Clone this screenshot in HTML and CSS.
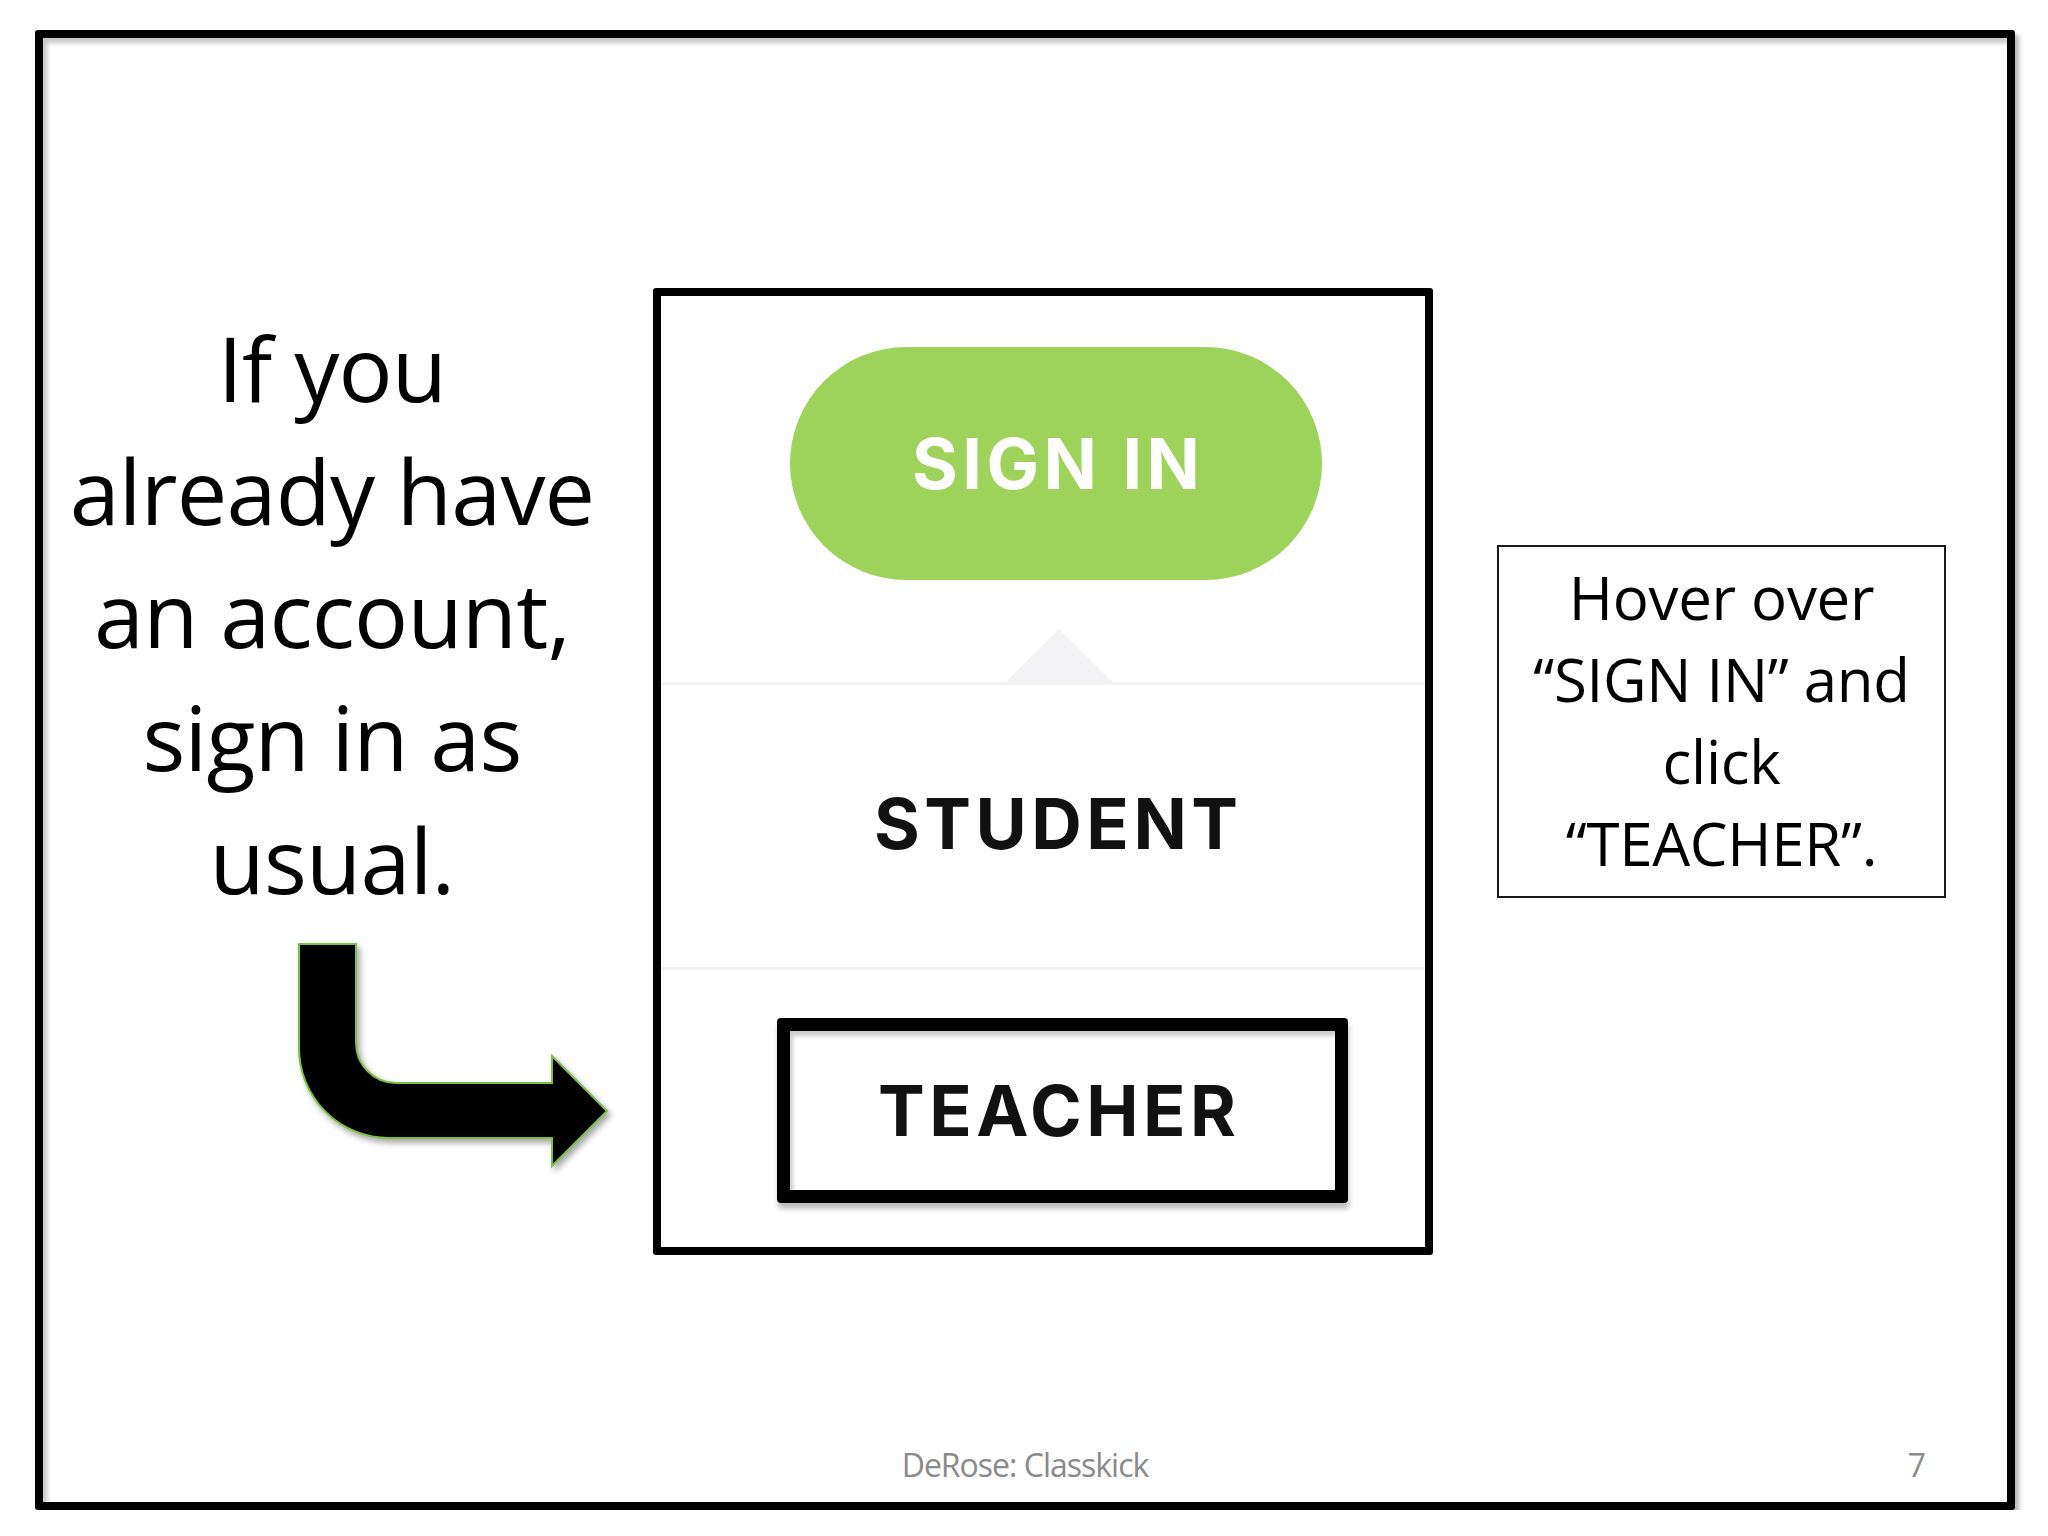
FILE: index.html
```html
<!DOCTYPE html>
<html>
<head>
<meta charset="utf-8">
<link rel="stylesheet" href="styles.css">
</head>
<body>
<div class="slide">
  <div class="main">
    <div class="left">
      <p class="lead">If you<br>already have<br>an account,<br>sign in as<br>usual.</p>
      <svg class="arrow" width="330" height="245" viewBox="290 935 330 245">
        <path d="M299,944 L356,944 L356,1043 A40,40 0 0 0 396,1083 L552,1083 L552,1056 L607,1111 L552,1166 L552,1138 L389,1138 A90,90 0 0 1 299,1048 Z" fill="#000" stroke="#7cc142" stroke-width="2" stroke-linejoin="miter"/>
      </svg>
    </div>
    <div class="panel">
      <div class="sec sec-top">
        <div class="pill"><span class="label label-white">SIGN IN</span></div>
        <div class="caret"></div>
      </div>
      <div class="sec sec-mid">
        <span class="label">STUDENT</span>
      </div>
      <div class="sec sec-bot">
        <div class="tbox"><span class="label label-teacher">TEACHER</span></div>
      </div>
    </div>
    <div class="note">Hover over<br>“SIGN IN” and<br>click<br>“TEACHER”.</div>
  </div>
  <div class="foot">
    <span></span>
    <span class="foot-title">DeRose: Classkick</span>
    <span class="foot-num">7</span>
  </div>
</div>
</body>
</html>
```

FILE: styles.css
```css
html, body {
  margin: 0;
  padding: 0;
  background: #ffffff;
}

body {
  font-family: "Open Sans", "Liberation Sans", sans-serif;
  color: #000;
}

.slide {
  margin: 30px 0 0 35px;
  width: 1980px;
  height: 1480px;
  box-sizing: border-box;
  border: 8px solid #000;
  border-radius: 3px;
  display: flex;
  flex-direction: column;
  box-shadow: 4px 5px 5px rgba(0, 0, 0, 0.3), inset 4px 5px 5px rgba(0, 0, 0, 0.22);
}

.main {
  flex: 1;
  display: flex;
  align-items: flex-start;
}

.left {
  width: 578px;
  margin-top: 268px;
  text-align: center;
}

.lead {
  margin: 0;
  font-size: 90px;
  line-height: 123px;
  letter-spacing: -0.8px;
}

.arrow {
  display: block;
  margin: 14px 0 0 247px;
  filter: drop-shadow(3px 4px 3px rgba(0, 0, 0, 0.35));
}

.panel {
  margin: 250px 0 0 32px;
  width: 780px;
  height: 967px;
  box-sizing: border-box;
  border: 8px solid #000;
  border-radius: 3px;
  display: flex;
  flex-direction: column;
}

.sec {
  padding-left: 26px;
  display: flex;
  flex-direction: column;
  align-items: center;
  box-sizing: border-box;
}

.sec-top {
  height: 386px;
}

.pill {
  margin-top: 51px;
  width: 532px;
  height: 233px;
  border-radius: 117px;
  background: #9dd35b;
  display: flex;
  align-items: center;
  justify-content: center;
}

.caret {
  margin-top: auto;
  margin-left: 6px;
  width: 107px;
  height: 53px;
  background: #f3f3f6;
  clip-path: polygon(50% 0, 100% 100%, 0 100%);
}

.sec-mid {
  height: 285px;
  border-top: 3px solid #f2f2f4;
  justify-content: center;
  padding-bottom: 5px;
}

.sec-bot {
  flex: 1;
  border-top: 3px solid #f2f2f4;
}

.tbox {
  margin: 48px 0 0 13px;
  width: 571px;
  height: 185px;
  box-sizing: border-box;
  border: 13px solid #000;
  border-radius: 4px;
  display: flex;
  align-items: center;
  justify-content: center;
  box-shadow: 1px 6px 5px rgba(0, 0, 0, 0.25), inset 3px 5px 4px rgba(0, 0, 0, 0.2);
}

.label {
  font-family: Inter, "Liberation Sans", sans-serif;
  font-weight: 700;
  font-size: 70px;
  line-height: 1;
  letter-spacing: 4.5px;
  padding-left: 4.5px;
  color: #111;
}

.label-white {
  color: #ffffff;
}

.label-teacher {
  padding-left: 0;
  padding-right: 6.5px;
}

.note {
  margin: 507px 0 0 64px;
  width: 449px;
  height: 353px;
  box-sizing: border-box;
  border: 2px solid #1a1a1a;
  padding-top: 9px;
  text-align: center;
  font-size: 60px;
  line-height: 82px;
  letter-spacing: -0.3px;
}

.foot {
  display: grid;
  grid-template-columns: 1fr auto 1fr;
  padding: 0 82px 15px 82px;
  font-size: 32px;
  line-height: 44px;
  letter-spacing: -1px;
  color: #8a8a8a;
}

.foot-num {
  justify-self: end;
}
```
